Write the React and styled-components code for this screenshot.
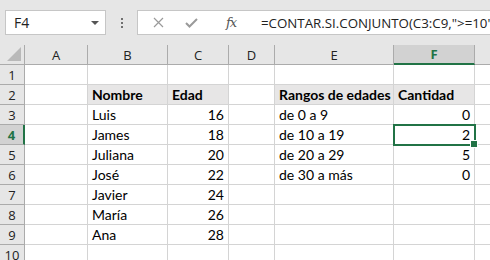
import React from 'react';
import styled, { createGlobalStyle } from 'styled-components';

const GlobalStyle = createGlobalStyle`
  html, body {
    margin: 0;
    padding: 0;
    background: #ffffff;
    overflow: hidden;
  }
`;

const COLS = [
  { key: 'A', width: 63 },
  { key: 'B', width: 80 },
  { key: 'C', width: 61 },
  { key: 'D', width: 46 },
  { key: 'E', width: 119 },
  { key: 'F', width: 81 },
  { key: 'G', width: 60 },
];

const rows = [
  {},
  { B: 'Nombre', C: 'Edad', E: 'Rangos de edades', F: 'Cantidad', head: true },
  { B: 'Luis', C: 16, E: 'de 0 a 9', F: 0 },
  { B: 'James', C: 18, E: 'de 10 a 19', F: 2 },
  { B: 'Juliana', C: 20, E: 'de 20 a 29', F: 5 },
  { B: 'José', C: 22, E: 'de 30 a más', F: 0 },
  { B: 'Javier', C: 24 },
  { B: 'María', C: 26 },
  { B: 'Ana', C: 28 },
  {},
];

const App = () => {
  return (
    <>
      <GlobalStyle />
      <Sheet>
        <Toolbar>
          <NameBox>
            <span>F4</span>
            <Caret />
          </NameBox>
          <Grip>
            <i /><i /><i />
          </Grip>
          <FormulaBox>
            <IconSlot width={40}>
              <svg width="11" height="11" viewBox="0 0 11 11">
                <path d="M1 1 L10 10 M10 1 L1 10" stroke="#9a9a9a" strokeWidth="1.2" fill="none" />
              </svg>
            </IconSlot>
            <IconSlot width={26}>
              <svg width="13" height="10" viewBox="0 0 13 10">
                <path d="M1 5 L4.5 8.5 L12 1" stroke="#9a9a9a" strokeWidth="2" fill="none" />
              </svg>
            </IconSlot>
            <Fx>fx</Fx>
            <Formula>=CONTAR.SI.CONJUNTO(C3:C9,"&gt;=10",C3:C9,"&lt;=19")</Formula>
          </FormulaBox>
        </Toolbar>

        <Grid>
          <Corner>
            <svg width="14" height="14" viewBox="0 0 14 14">
              <path d="M14 0 L14 14 L0 14 Z" fill="#b9b9b9" />
            </svg>
          </Corner>
          {COLS.map((c) => (
            <ColHead key={c.key} selected={c.key === 'F'}>{c.key}</ColHead>
          ))}

          {rows.map((row, i) => {
            const n = i + 1;
            return (
              <React.Fragment key={n}>
                <RowHead selected={n === 4}>{n}</RowHead>
                {COLS.map((c) => {
                  const v = row[c.key];
                  const shaded = row.head && ['B', 'C', 'E', 'F'].includes(c.key);
                  const numeric = typeof v === 'number';
                  const active = n === 4 && c.key === 'F';
                  return (
                    <Cell
                      key={c.key}
                      shaded={shaded}
                      bold={row.head}
                      numeric={numeric}
                      active={active}
                    >
                      {v}
                      {active && <Handle />}
                    </Cell>
                  );
                })}
              </React.Fragment>
            );
          })}
        </Grid>
      </Sheet>
    </>
  );
};

export default App;

const Sheet = styled.div`
  width: 490px;
  height: 260px;
  overflow: hidden;
  background: #ffffff;
`;

const Toolbar = styled.div`
  height: 45px;
  background: #e6e6e6;
  display: flex;
  align-items: flex-start;
  padding-top: 10px;
  box-sizing: border-box;
  font-family: "Open Sans", "Noto Sans", sans-serif;
`;

const NameBox = styled.div`
  margin-left: 5px;
  width: 101px;
  height: 25px;
  box-sizing: border-box;
  background: #ffffff;
  border: 1px solid #c6c6c6;
  display: flex;
  align-items: center;
  justify-content: space-between;
  padding: 0 6px 0 8px;
  font-size: 14px;
  color: #222222;
`;

const Caret = styled.span`
  width: 0;
  height: 0;
  border-left: 4px solid transparent;
  border-right: 4px solid transparent;
  border-top: 4px solid #555555;
`;

const Grip = styled.div`
  width: 31px;
  height: 25px;
  display: flex;
  flex-direction: column;
  align-items: center;
  justify-content: center;
  gap: 2px;

  i {
    display: block;
    width: 2px;
    height: 2px;
    background: #6f6f6f;
  }
`;

const FormulaBox = styled.div`
  flex: 1;
  height: 25px;
  box-sizing: border-box;
  background: #ffffff;
  border: 1px solid #c6c6c6;
  border-right: none;
  display: flex;
  align-items: center;
  overflow: hidden;
  white-space: nowrap;
`;

const IconSlot = styled.span`
  width: ${(p) => p.width}px;
  display: flex;
  justify-content: center;
  align-items: center;
  flex-shrink: 0;
`;

const Fx = styled.span`
  width: 54px;
  flex-shrink: 0;
  text-align: center;
  font-family: "DejaVu Serif", "Liberation Serif", serif;
  font-style: italic;
  font-size: 13px;
  color: #555555;
  letter-spacing: -1px;
`;

const Formula = styled.span`
  padding-left: 3px;
  font-size: 13.3px;
  color: #222222;
`;

const Grid = styled.div`
  display: grid;
  grid-template-columns: 25px ${COLS.map((c) => `${c.width}px`).join(' ')};
  grid-auto-rows: 20px;
  font-family: Lato, "Open Sans", sans-serif;
`;

const Corner = styled.div`
  background: #e6e6e6;
  border-right: 1px solid #ababab;
  border-bottom: 1px solid #ababab;
  box-sizing: border-box;
  display: flex;
  align-items: flex-end;
  justify-content: flex-end;
  padding: 0 3px 3px 0;
`;

const ColHead = styled.div`
  background: ${(p) => (p.selected ? '#d2d2d2' : '#e6e6e6')};
  color: ${(p) => (p.selected ? '#217346' : '#222222')};
  font-weight: ${(p) => (p.selected ? 700 : 400)};
  border-right: 1px solid #ababab;
  border-bottom: ${(p) => (p.selected ? '2px solid #217346' : '1px solid #ababab')};
  box-sizing: border-box;
  font-family: "Open Sans", "Noto Sans", sans-serif;
  font-size: 13px;
  display: flex;
  align-items: center;
  justify-content: center;
`;

const RowHead = styled.div`
  background: ${(p) => (p.selected ? '#d2d2d2' : '#e6e6e6')};
  color: ${(p) => (p.selected ? '#217346' : '#222222')};
  font-weight: ${(p) => (p.selected ? 700 : 400)};
  border-right: ${(p) => (p.selected ? '2px solid #217346' : '1px solid #ababab')};
  border-bottom: 1px solid #ababab;
  box-sizing: border-box;
  font-family: "Open Sans", "Noto Sans", sans-serif;
  font-size: 13px;
  display: flex;
  align-items: center;
  justify-content: center;
`;

const Cell = styled.div`
  position: relative;
  box-sizing: border-box;
  border-right: 1px solid #d4d4d4;
  border-bottom: 1px solid #d4d4d4;
  background: ${(p) => (p.shaded ? '#e7e6e6' : '#ffffff')};
  font-weight: ${(p) => (p.bold ? 700 : 400)};
  font-size: 14px;
  color: #000000;
  display: flex;
  align-items: center;
  justify-content: ${(p) => (p.numeric ? 'flex-end' : 'flex-start')};
  padding: 0 4px 0 4px;
  white-space: nowrap;
  outline: ${(p) => (p.active ? '2px solid #217346' : 'none')};
  outline-offset: -1px;
  z-index: ${(p) => (p.active ? 2 : 0)};
`;

const Handle = styled.span`
  position: absolute;
  right: -4px;
  bottom: -4px;
  width: 6px;
  height: 6px;
  background: #217346;
  border: 1px solid #ffffff;
`;
